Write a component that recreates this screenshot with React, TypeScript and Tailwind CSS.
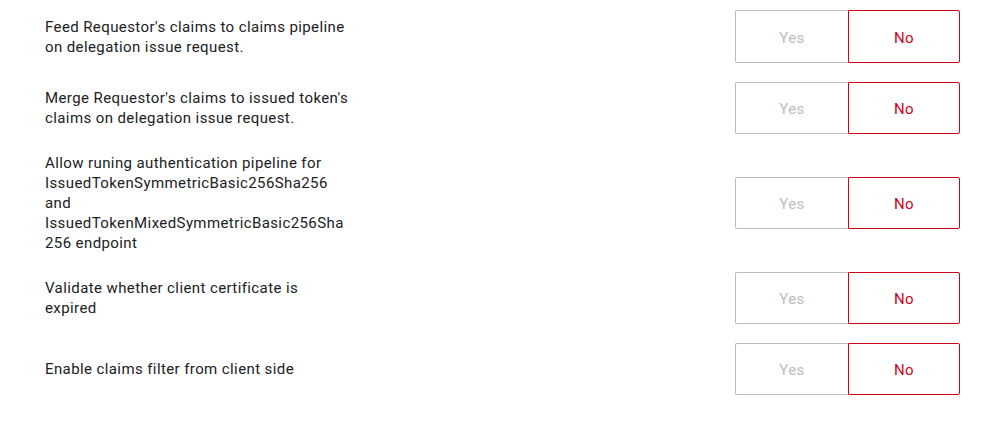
import React from "react";

const rows: string[] = [
  "Feed Requestor's claims to claims pipeline on delegation issue request.",
  "Merge Requestor's claims to issued token's claims on delegation issue request.",
  "Allow runing authentication pipeline for IssuedTokenSymmetricBasic256Sha256 and IssuedTokenMixedSymmetricBasic256Sha256 endpoint",
  "Validate whether client certificate is expired",
  "Enable claims filter from client side",
];

function Toggle({ first }: { first: boolean }) {
  return (
    <div className={`flex ${first ? "h-[53px]" : "h-[52px]"} w-[225px] shrink-0 text-[15px] tracking-[0.4px]`}>
      <button className="flex-1 rounded-l-[2px] border border-r-0 border-[#bdbdbd] bg-white pt-[3px] text-[#bdbdbd]">
        Yes
      </button>
      <button className="w-[112px] rounded-r-[2px] border border-[#d0021b] bg-white pt-[3px] text-[#d0021b]">
        No
      </button>
    </div>
  );
}

export default function App() {
  return (
    <div
      className="min-h-[443px] w-[988px] bg-white pl-[45px] pr-[28px] pt-[10px] text-[#212121]"
      style={{ fontFamily: "Roboto, 'Noto Sans', sans-serif" }}
    >
      <div className="flex flex-col gap-[19px]">
        {rows.map((r, i) => (
          <div key={i} className="flex items-center justify-between">
            <div className="w-[304px] text-[15px] leading-[20px] tracking-[0.4px] [overflow-wrap:anywhere]">
              {r}
            </div>
            <Toggle first={i === 0} />
          </div>
        ))}
      </div>
    </div>
  );
}
